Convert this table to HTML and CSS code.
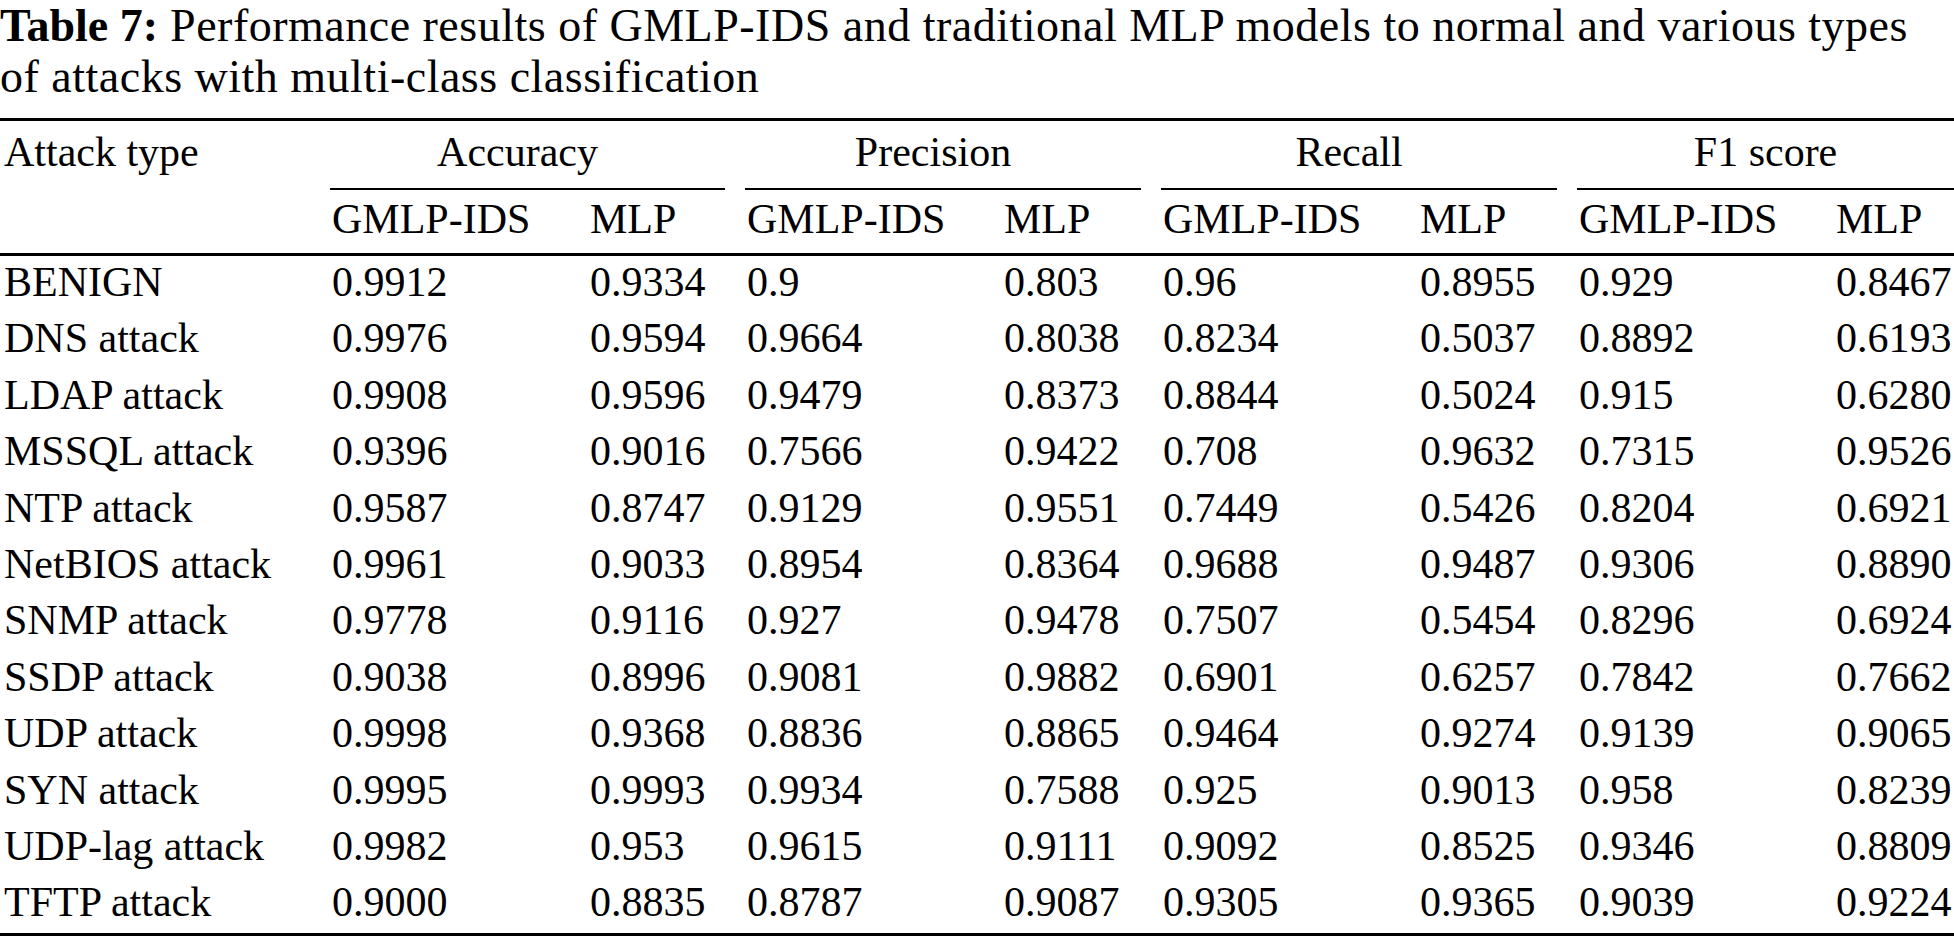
FILE: index.html
```html
<!DOCTYPE html>
<html lang="en">
<head>
<meta charset="utf-8">
<title>Table 7</title>
<link rel="stylesheet" href="styles.css">
</head>
<body>
<p class="caption"><b>Table 7:</b> Performance results of GMLP-IDS and traditional MLP models to normal and various types<br>of attacks with multi-class classification</p>
<table class="results">
  <colgroup>
    <col class="c-label">
    <col class="c-g1"><col class="c-m1">
    <col class="c-g2"><col class="c-m2">
    <col class="c-g3"><col class="c-m3">
    <col class="c-g4"><col class="c-m4">
  </colgroup>
  <thead>
    <tr class="head-top">
      <th rowspan="2" class="label-head">Attack type</th>
      <th colspan="2" class="group"><div class="group-label">Accuracy</div></th>
      <th colspan="2" class="group"><div class="group-label">Precision</div></th>
      <th colspan="2" class="group"><div class="group-label">Recall</div></th>
      <th colspan="2" class="group"><div class="group-label last">F1 score</div></th>
    </tr>
    <tr class="head-sub">
      <th>GMLP-IDS</th><th>MLP</th>
      <th>GMLP-IDS</th><th>MLP</th>
      <th>GMLP-IDS</th><th>MLP</th>
      <th>GMLP-IDS</th><th>MLP</th>
    </tr>
  </thead>
  <tbody>
    <tr><td>BENIGN</td><td>0.9912</td><td>0.9334</td><td>0.9</td><td>0.803</td><td>0.96</td><td>0.8955</td><td>0.929</td><td>0.8467</td></tr>
    <tr><td>DNS attack</td><td>0.9976</td><td>0.9594</td><td>0.9664</td><td>0.8038</td><td>0.8234</td><td>0.5037</td><td>0.8892</td><td>0.6193</td></tr>
    <tr><td>LDAP attack</td><td>0.9908</td><td>0.9596</td><td>0.9479</td><td>0.8373</td><td>0.8844</td><td>0.5024</td><td>0.915</td><td>0.6280</td></tr>
    <tr><td>MSSQL attack</td><td>0.9396</td><td>0.9016</td><td>0.7566</td><td>0.9422</td><td>0.708</td><td>0.9632</td><td>0.7315</td><td>0.9526</td></tr>
    <tr><td>NTP attack</td><td>0.9587</td><td>0.8747</td><td>0.9129</td><td>0.9551</td><td>0.7449</td><td>0.5426</td><td>0.8204</td><td>0.6921</td></tr>
    <tr><td>NetBIOS attack</td><td>0.9961</td><td>0.9033</td><td>0.8954</td><td>0.8364</td><td>0.9688</td><td>0.9487</td><td>0.9306</td><td>0.8890</td></tr>
    <tr><td>SNMP attack</td><td>0.9778</td><td>0.9116</td><td>0.927</td><td>0.9478</td><td>0.7507</td><td>0.5454</td><td>0.8296</td><td>0.6924</td></tr>
    <tr><td>SSDP attack</td><td>0.9038</td><td>0.8996</td><td>0.9081</td><td>0.9882</td><td>0.6901</td><td>0.6257</td><td>0.7842</td><td>0.7662</td></tr>
    <tr><td>UDP attack</td><td>0.9998</td><td>0.9368</td><td>0.8836</td><td>0.8865</td><td>0.9464</td><td>0.9274</td><td>0.9139</td><td>0.9065</td></tr>
    <tr><td>SYN attack</td><td>0.9995</td><td>0.9993</td><td>0.9934</td><td>0.7588</td><td>0.925</td><td>0.9013</td><td>0.958</td><td>0.8239</td></tr>
    <tr><td>UDP-lag attack</td><td>0.9982</td><td>0.953</td><td>0.9615</td><td>0.9111</td><td>0.9092</td><td>0.8525</td><td>0.9346</td><td>0.8809</td></tr>
    <tr><td>TFTP attack</td><td>0.9000</td><td>0.8835</td><td>0.8787</td><td>0.9087</td><td>0.9305</td><td>0.9365</td><td>0.9039</td><td>0.9224</td></tr>
  </tbody>
</table>
</body>
</html>
```
FILE: styles.css
```css
html, body {
  margin: 0;
  padding: 0;
  background: #ffffff;
  color: #000000;
  font-family: "Liberation Serif", "DejaVu Serif", serif;
}

.caption {
  margin: 0;
  font-size: 46px;
  line-height: 51px;
  letter-spacing: 0.5px;
  white-space: nowrap;
}

.caption b {
  font-weight: bold;
  letter-spacing: 0;
}

.results {
  margin-top: 16px;
  width: 1954px;
  table-layout: fixed;
  border-collapse: separate;
  border-spacing: 0;
  border-top: 3px solid #000;
  border-bottom: 3px solid #000;
  font-family: "Liberation Serif", "DejaVu Serif", serif;
  font-size: 42px;
}

.c-label { width: 330px; }
.c-g1 { width: 258px; }
.c-m1 { width: 157px; }
.c-g2 { width: 257px; }
.c-m2 { width: 159px; }
.c-g3 { width: 257px; }
.c-m3 { width: 159px; }
.c-g4 { width: 257px; }
.c-m4 { width: 120px; }

.results th,
.results td {
  padding: 0 0 0 2px;
  text-align: left;
  font-weight: normal;
  white-space: nowrap;
}

.results th {
  line-height: 47px;
  vertical-align: top;
}

.head-top th {
  padding-top: 8px;
}

.results th.label-head {
  padding-left: 4px;
  border-bottom: 3px solid #000;
}

.results th.group {
  padding-left: 0;
}

.group-label {
  margin-right: 20px;
  padding-right: 20px;
  padding-bottom: 12px;
  border-bottom: 2px solid #000;
  text-align: center;
}

.group-label.last {
  margin-right: 0;
  padding-right: 0;
}

.head-sub th {
  padding-top: 6px;
  padding-bottom: 10px;
  border-bottom: 3px solid #000;
}

.results td {
  line-height: 53.8px;
  padding-bottom: 2.6px;
  vertical-align: baseline;
}

.results td:first-child {
  padding-left: 4px;
}
```
